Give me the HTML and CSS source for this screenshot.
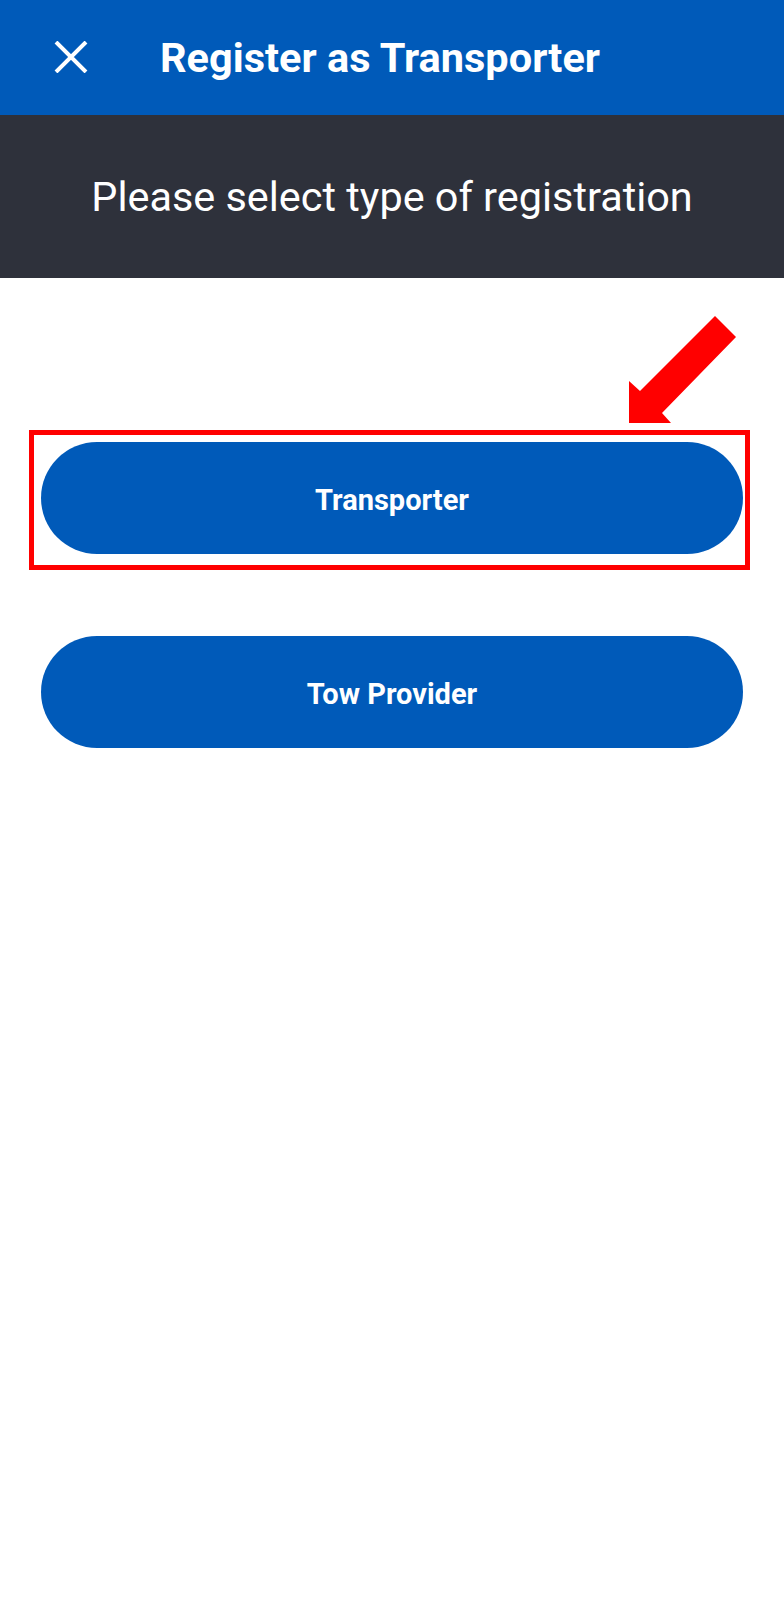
FILE: index.html
```html
<!DOCTYPE html>
<html lang="en">
<head>
<meta charset="UTF-8">
<meta name="viewport" content="width=device-width, initial-scale=1.0">
<title>Register as Transporter</title>
<link rel="stylesheet" href="styles.css">
</head>
<body>
<header class="top-bar">
    <button class="close-btn" aria-label="Close">
        <svg width="34" height="32" viewBox="0 0 34 32">
            <path d="M2 1 L32 31 M32 1 L2 31" stroke="#fff" stroke-width="4" fill="none"/>
        </svg>
    </button>
    <h1 class="top-title">Register as Transporter</h1>
</header>
<div class="sub-bar">
    <p>Please select type of registration</p>
</div>
<main class="choices">
    <button class="choice-btn">Transporter</button>
    <button class="choice-btn">Tow Provider</button>

    <!-- annotation overlay -->
    <div class="mark-box"></div>
    <svg class="mark-arrow" width="120" height="120" viewBox="620 310 120 120">
        <polygon points="629,423 629,381 640,391 715,316 736,337 662,413 671,423" fill="#ff0000"/>
    </svg>
</main>
</body>
</html>
```

FILE: styles.css
```css
body {
    margin: 0;
    padding: 0;
    font-family: Roboto, "Liberation Sans", Arial, sans-serif;
    background-color: #fff;
}

.top-bar {
    background-color: #005ab9;
    height: 115px;
    display: flex;
    align-items: center;
    padding-left: 54px;
    box-sizing: border-box;
}

.close-btn {
    background: none;
    border: none;
    padding: 0;
    width: 34px;
    height: 32px;
    display: flex;
    margin-top: -2px;
}

.top-title {
    margin: 0 0 0 72px;
    color: #fff;
    font-size: 41.5px;
    font-weight: 700;
}

.sub-bar {
    background-color: #2e313b;
    height: 163px;
    display: flex;
    align-items: center;
    justify-content: center;
}

.sub-bar p {
    margin: 0;
    color: #fff;
    font-size: 41.4px;
    font-weight: 400;
}

.choices {
    position: relative;
    padding: 164px 41px 0 41px;
    display: flex;
    flex-direction: column;
    gap: 82px;
}

.choice-btn {
    height: 112px;
    width: 100%;
    border: none;
    border-radius: 56px;
    background-color: #005ab9;
    color: #fff;
    font-family: Roboto, "Liberation Sans", Arial, sans-serif;
    font-size: 29px;
    font-weight: 700;
    padding-top: 5px;
    cursor: pointer;
}

.mark-box {
    position: absolute;
    left: 29px;
    top: 152px;
    width: 711px;
    height: 130px;
    border: 5px solid #ff0000;
}

.mark-arrow {
    position: absolute;
    left: 620px;
    top: 32px;
}
```
